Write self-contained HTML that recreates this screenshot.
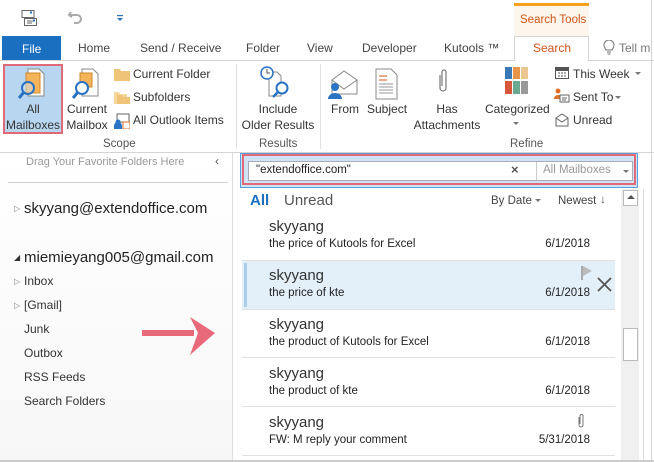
<!DOCTYPE html>
<html><head><meta charset="utf-8"><style>
*{margin:0;padding:0;box-sizing:border-box}
body{width:654px;height:462px;overflow:hidden;background:#fff;font-family:"Liberation Sans",sans-serif;color:#333;position:relative;font-size:11.5px}
.a{position:absolute;white-space:nowrap}
.t{font-size:12px;color:#444;top:41px}
.c{text-align:center}
.sep{position:absolute;width:1px;background:#e1e1e1}
.hl{position:absolute;height:1px;background:#e1e1e1;left:242px;width:373px}
.nm{font-size:15px;color:#333;left:269px}
.sb{font-size:11.5px;color:#222;left:269px}
.dt{font-size:11.5px;color:#222;right:64px}
</style></head><body>
<svg class="a" style="left:20px;top:9px" width="18" height="18" viewBox="0 0 18 18" fill="none" stroke="#666" stroke-width="1"><rect x="2" y="1.5" width="12" height="7"/><rect x="4.5" y="9.5" width="12" height="7" fill="#fff"/><line x1="7" y1="12" x2="13" y2="12"/><line x1="7" y1="14" x2="12" y2="14"/><rect x="13" y="10.5" width="2" height="2" fill="#2a72c4" stroke="none"/><rect x="10" y="2.5" width="2" height="2" fill="#2a72c4" stroke="none"/></svg>
<svg class="a" style="left:67px;top:9px" width="16" height="16" viewBox="0 0 16 16" fill="none" stroke="#aaa" stroke-width="2"><path d="M4 3L2 6 5 8M2.5 6H10a4 4 0 0 1 0 8H7"/></svg>
<svg class="a" style="left:116px;top:15px" width="8" height="7"><rect x="1" y="0" width="6" height="1.2" fill="#2a72c4"/><path d="M1 3h6L4 6z" fill="#2a72c4"/></svg>
<div class="a" style="left:514px;top:3px;width:75px;height:3px;background:#f7a01c"></div>
<div class="a" style="left:514px;top:6px;width:75px;height:30px;background:#fdf6ec"></div>
<div class="a" style="left:520px;top:14px;font-size:11.5px;color:#d2541a">Search Tools</div>
<div class="a" style="left:2px;top:36px;width:59px;height:24px;background:#1a6fc1"></div>
<div class="a t" style="left:22px;top:42px;color:#fff">File</div>
<div class="a t" style="left:78px">Home</div>
<div class="a t" style="left:140px">Send / Receive</div>
<div class="a t" style="left:246px">Folder</div>
<div class="a t" style="left:307px">View</div>
<div class="a t" style="left:362px">Developer</div>
<div class="a t" style="left:444px">Kutools ™</div>
<div class="a" style="left:514px;top:36px;width:75px;height:25px;border:1px solid #d4d4d4;border-bottom:none;background:#fff"></div>
<div class="a t" style="left:533px;color:#d2541a">Search</div>
<svg class="a" style="left:603px;top:40px" width="12" height="16" fill="none" stroke="#777"><path d="M3 10C1 7 1 6 1 5a5 5 0 0 1 10 0c0 1 0 2-2 5zM4 12h4M4.5 14h3"/></svg>
<div class="a t" style="left:619px;color:#777">Tell m</div>
<div class="a" style="left:0;top:60px;width:654px;height:1px;background:#d4d4d4"></div>
<div class="a" style="left:0;top:61px;width:654px;height:91px;background:#fff"></div>
<div class="a" style="left:515px;top:60px;width:73px;height:1px;background:#fff"></div>
<div class="a" style="left:3px;top:64px;width:60px;height:70px;background:#b8d6f0;border:2px solid #e06a78"></div>
<svg class="a" style="left:18px;top:67px" width="30" height="34" viewBox="0 0 30 34"><path d="M10 2h11l5 5v22H10z" fill="#fff" stroke="#888"/><rect x="8" y="6" width="14" height="20" fill="#f5b35a" stroke="#d08a2a"/><circle cx="10" cy="21" r="6" fill="#cfe4f5" fill-opacity=".5" stroke="#2a72c4" stroke-width="2"/><line x1="6" y1="25" x2="1" y2="31" stroke="#2a72c4" stroke-width="3"/></svg>
<div class="a c" style="left:3px;top:101px;width:60px;font-size:12px;line-height:16px">All<br>Mailboxes</div>
<svg class="a" style="left:72px;top:67px" width="30" height="34" viewBox="0 0 30 34"><path d="M10 2h11l5 5v22H10z" fill="#fff" stroke="#888"/><rect x="8" y="6" width="12" height="14" fill="#f5b35a" stroke="#d08a2a"/><circle cx="10" cy="21" r="6" fill="#fff" stroke="#2a72c4" stroke-width="2"/><line x1="6" y1="25" x2="1" y2="31" stroke="#2a72c4" stroke-width="3"/></svg>
<div class="a c" style="left:64px;top:101px;width:46px;font-size:12px;line-height:16px">Current<br>Mailbox</div>
<svg class="a" style="left:114px;top:67px" width="16" height="14"><path d="M0 2h6l1 2h9v10H0z" fill="#f0c478"/></svg>
<div class="a" style="left:133px;top:67px;font-size:12px">Current Folder</div>
<svg class="a" style="left:114px;top:90px" width="16" height="14"><path d="M0 2h5l1 2h7v10H0z" fill="#f5d79a"/><path d="M3 5h5l1 2h7v7H3z" fill="#f0c478"/></svg>
<div class="a" style="left:133px;top:90px;font-size:12px">Subfolders</div>
<svg class="a" style="left:114px;top:113px" width="16" height="16"><rect x="3" y="1" width="12" height="8" fill="none" stroke="#666"/><circle cx="4" cy="9" r="2.5" fill="#2a72c4"/><path d="M0 16v-3a4 4 0 0 1 8 0v3z" fill="#2a72c4"/><rect x="9" y="9" width="7" height="7" fill="#fff" stroke="#e0702a"/></svg>
<div class="a" style="left:133px;top:113px;font-size:12px">All Outlook Items</div>
<div class="a" style="left:103px;top:138px;font-size:11.5px;color:#555">Scope</div>
<div class="sep" style="left:236px;top:64px;height:85px"></div>
<svg class="a" style="left:258px;top:64px" width="36" height="36" viewBox="0 0 36 36" fill="none"><path d="M11 8h8l4 4v20H11z" stroke="#888" fill="#fff"/><circle cx="9" cy="9" r="6" fill="#fff" stroke="#2a72c4" stroke-width="1.5"/><path d="M9 5v4h3" stroke="#555"/><circle cx="24" cy="24" r="5.5" fill="#fff" stroke="#2a72c4" stroke-width="2"/><line x1="20" y1="28" x2="15" y2="33" stroke="#2a72c4" stroke-width="2.5"/></svg>
<div class="a c" style="left:240px;top:101px;width:76px;font-size:12px;line-height:16px">Include<br>Older Results</div>
<div class="a" style="left:259px;top:138px;color:#555">Results</div>
<div class="sep" style="left:320px;top:64px;height:85px"></div>
<svg class="a" style="left:328px;top:68px" width="32" height="32" viewBox="0 0 32 32"><path d="M4 12L16 3l13 9v14H4z" fill="#fff" stroke="#888"/><path d="M4 12l12 9 13-9" fill="none" stroke="#888"/><circle cx="7" cy="19" r="4" fill="#2a72c4"/><path d="M0 31a7 6 0 0 1 14 0z" fill="#2a72c4"/></svg>
<div class="a" style="left:331px;top:102px;font-size:12px">From</div>
<svg class="a" style="left:375px;top:68px" width="24" height="32"><path d="M1 1h15l6 6v24H1z" fill="#fff" stroke="#888"/><path d="M4 8h8M4 12h8" stroke="#d2541a"/><path d="M4 16h14M4 19h14M4 22h14M4 25h14" stroke="#999"/></svg>
<div class="a" style="left:367px;top:102px;font-size:12px">Subject</div>
<svg class="a" style="left:437px;top:67px" width="12" height="28" fill="none" stroke="#777" stroke-width="1.2"><path d="M3 8v13a3 3 0 0 0 6 0V5a2 2 0 0 0-4 0v14"/></svg>
<div class="a c" style="left:408px;top:101px;width:78px;font-size:12px;line-height:16px">Has<br>Attachments</div>
<svg class="a" style="left:505px;top:67px" width="24" height="28"><rect x="0" y="0" width="7" height="12" fill="#3a78b8"/><rect x="8" y="0" width="7" height="12" fill="#e8944a"/><rect x="16" y="0" width="7" height="12" fill="#ecc890"/><rect x="0" y="14" width="7" height="13" fill="#d8563a"/><rect x="8" y="14" width="7" height="13" fill="#6aa890"/><rect x="16" y="14" width="7" height="13" fill="#999"/></svg>
<div class="a" style="left:485px;top:102px;font-size:12px">Categorized</div>
<svg class="a" style="left:513px;top:122px" width="6" height="4"><path d="M0 0h6L3 3z" fill="#777"/></svg>
<div class="a" style="left:510px;top:138px;color:#555">Refine</div>
<svg class="a" style="left:555px;top:67px" width="15" height="13"><rect x=".5" y=".5" width="13" height="11" fill="#fff" stroke="#555"/><rect x="1" y="1" width="13" height="3" fill="#555"/><path d="M3 6h2M6 6h2M9 6h2M3 9h2M6 9h2M9 9h2" stroke="#555"/></svg>
<div class="a" style="left:573px;top:67px;font-size:12px">This Week</div>
<svg class="a" style="left:635px;top:72px" width="6" height="4"><path d="M0 0h6L3 3z" fill="#777"/></svg>
<svg class="a" style="left:554px;top:88px" width="16" height="16"><circle cx="4" cy="3" r="2.5" fill="#e0702a"/><path d="M0 11a4 4 0 0 1 8 0z" fill="#e0702a"/><rect x="6" y="7" width="9" height="7" fill="#fff" stroke="#666"/><path d="M8 10h5M8 12h4" stroke="#666"/></svg>
<div class="a" style="left:573px;top:90px;font-size:12px">Sent To</div>
<svg class="a" style="left:615px;top:96px" width="6" height="4"><path d="M0 0h6L3 3z" fill="#777"/></svg>
<svg class="a" style="left:555px;top:113px" width="15" height="14" fill="#fff" stroke="#666"><path d="M1 5l6-4 6 4v8H1z"/><path d="M1 5l6 4 6-4" fill="none"/></svg>
<div class="a" style="left:573px;top:113px;font-size:12px">Unread</div>
<div class="a" style="left:0;top:152px;width:654px;height:1px;background:#d4d4d4"></div>
<div class="a" style="left:651px;top:0;width:1px;height:462px;background:#d4d4d4"></div>
<div class="a" style="left:0;top:153px;width:232px;height:309px;background:linear-gradient(#fff,#f7f7f7)"></div>
<div class="a" style="left:232px;top:153px;width:1px;height:309px;background:#ddd"></div>
<div class="a" style="left:26px;top:156px;font-size:11px;color:#999">Drag Your Favorite Folders Here</div>
<div class="a" style="left:215px;top:154px;font-size:12px;color:#555">‹</div>
<div class="a" style="left:8px;top:182px;width:220px;height:1px;background:#d0d0d0"></div>
<div class="a" style="left:14px;top:204px;font-size:8px;color:#777">▷</div>
<div class="a" style="left:24px;top:200px;font-size:15px;color:#222">skyyang@extendoffice.com</div>
<div class="a" style="left:14px;top:253px;font-size:8px;color:#333">◢</div>
<div class="a" style="left:24px;top:249px;font-size:15px;color:#222">miemieyang005@gmail.com</div>
<div class="a" style="left:14px;top:277px;font-size:8px;color:#777">▷</div>
<div class="a" style="left:24px;top:274px;font-size:12px">Inbox</div>
<div class="a" style="left:14px;top:301px;font-size:8px;color:#777">▷</div>
<div class="a" style="left:24px;top:298px;font-size:12px">[Gmail]</div>
<div class="a" style="left:24px;top:322px;font-size:12px">Junk</div>
<div class="a" style="left:24px;top:346px;font-size:12px">Outbox</div>
<div class="a" style="left:24px;top:370px;font-size:12px">RSS Feeds</div>
<div class="a" style="left:24px;top:394px;font-size:12px">Search Folders</div>
<svg class="a" style="left:140px;top:315px" width="76" height="42"><rect x="2" y="15" width="52" height="6" fill="#e8697a"/><path d="M50 2L75 18 50 40 58 18z" fill="#e8697a"/></svg>
<div class="a" style="left:240px;top:153px;width:398px;height:35px;border:1px solid #5aa0dc;background:#cfe3f5"></div>
<div class="a" style="left:242px;top:154px;width:394px;height:31px;border:2px solid #e06a78"></div>
<div class="a" style="left:248px;top:161px;width:385px;height:20px;border:1px solid #aab;background:#fff"></div>
<div class="a" style="left:536px;top:162px;width:1px;height:18px;background:#ccc"></div>
<div class="a" style="left:256px;top:164px;font-size:11.5px;color:#222">"extendoffice.com"</div>
<div class="a" style="left:511px;top:162px;font-size:13px;color:#555;font-weight:bold">×</div>
<div class="a" style="left:543px;top:164px;font-size:11.5px;color:#999">All Mailboxes</div>
<svg class="a" style="left:623px;top:170px" width="6" height="4"><path d="M0 0h6L3 3z" fill="#777"/></svg>
<div class="a" style="left:250px;top:192px;font-size:15px;color:#1a6fc1;font-weight:bold">All</div>
<div class="a" style="left:284px;top:192px;font-size:15px;color:#555">Unread</div>
<div class="a" style="left:491px;top:195px;font-size:11.5px;color:#444">By Date</div>
<svg class="a" style="left:535px;top:199px" width="6" height="4"><path d="M0 0h6L3 3z" fill="#777"/></svg>
<div class="a" style="left:558px;top:195px;font-size:11.5px;color:#444">Newest</div>
<div class="a" style="left:600px;top:192px;font-size:12px;color:#555">↓</div>
<div class="a" style="left:621px;top:189px;width:18px;height:273px;background:#f0f0f0"></div>
<div class="a" style="left:623px;top:190px;width:15px;height:16px;border:1px solid #bbb;background:#fff"></div>
<svg class="a" style="left:627px;top:195px" width="8" height="5"><path d="M0 4h8L4 0z" fill="#555"/></svg>
<div class="a" style="left:623px;top:328px;width:15px;height:33px;border:1px solid #bbb;background:#fff"></div>
<div class="a" style="left:643px;top:189px;width:1px;height:273px;background:#ddd"></div>
<div class="a nm" style="top:218px">skyyang</div>
<div class="a sb" style="top:238px">the price of Kutools for Excel</div>
<div class="a dt" style="top:238px">6/1/2018</div>
<div class="hl" style="top:260px"></div>
<div class="a" style="left:242px;top:261px;width:373px;height:48px;background:#e3eff9"></div>
<div class="a" style="left:244px;top:263px;width:3px;height:44px;background:#a9cdea"></div>
<div class="a nm" style="top:267px">skyyang</div>
<div class="a sb" style="top:287px">the price of kte</div>
<div class="a dt" style="top:287px">6/1/2018</div>
<svg class="a" style="left:581px;top:266px" width="12" height="14"><rect x="0" y="0" width="2" height="14" fill="#aaa"/><path d="M2 0l9 5-9 5z" fill="#bbb"/></svg>
<svg class="a" style="left:597px;top:277px" width="15" height="15" stroke="#555" stroke-width="1.8"><path d="M1 1l13 13M14 1L1 14"/></svg>
<div class="hl" style="top:309px"></div>
<div class="a nm" style="top:316px">skyyang</div>
<div class="a sb" style="top:336px">the product of Kutools for Excel</div>
<div class="a dt" style="top:336px">6/1/2018</div>
<div class="hl" style="top:357px"></div>
<div class="a nm" style="top:365px">skyyang</div>
<div class="a sb" style="top:385px">the product of kte</div>
<div class="a dt" style="top:385px">6/1/2018</div>
<div class="hl" style="top:406px"></div>
<div class="a nm" style="top:414px">skyyang</div>
<div class="a sb" style="top:434px">FW: M reply your comment</div>
<div class="a dt" style="top:434px">5/31/2018</div>
<svg class="a" style="left:577px;top:413px" width="8" height="16" fill="none" stroke="#777"><path d="M2 4v8a2 2 0 0 0 4 0V3a1.5 1.5 0 0 0-3 0v8"/></svg>
<div class="hl" style="top:455px"></div>
<div class="a" style="left:0;top:460px;width:654px;height:2px;background:#ccc"></div>
</body></html>
